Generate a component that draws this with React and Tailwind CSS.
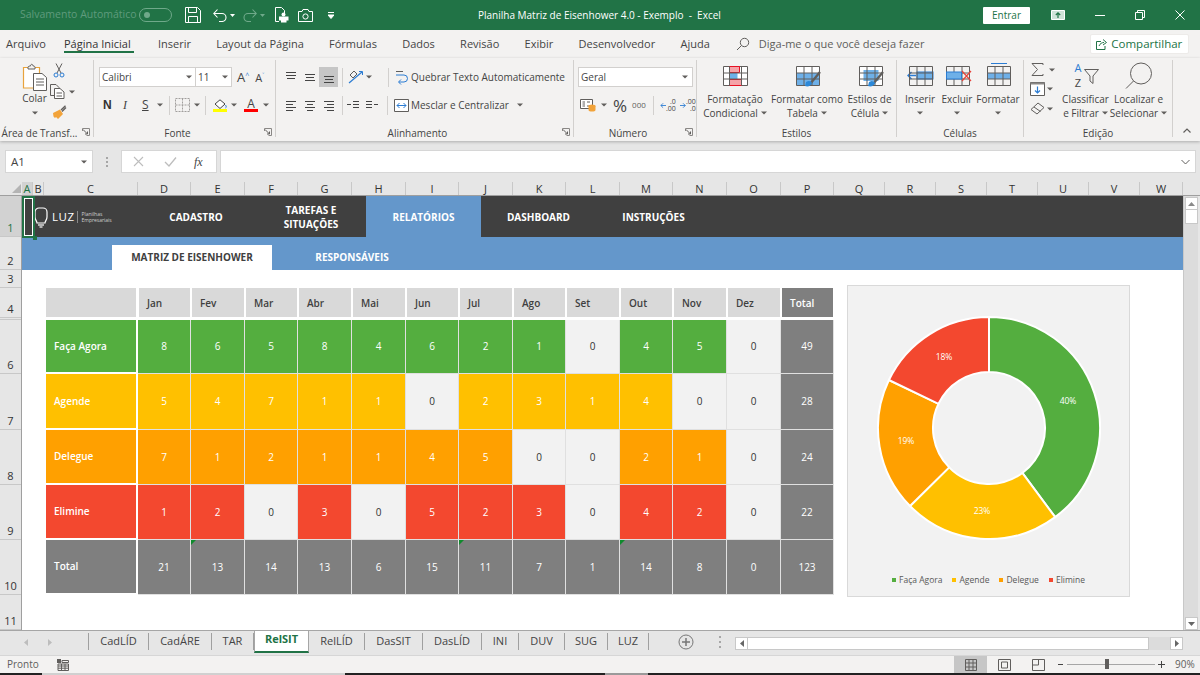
import React from 'react'

const ui = { fontFamily: '"Open Sans", "Noto Sans", sans-serif' }

const colHeads = [
  ['A', 11], ['B', 11], ['C', 94], ['D', 53], ['E', 54], ['F', 53], ['G', 54], ['H', 54], ['I', 53], ['J', 54], ['K', 53], ['L', 54],
  ['M', 53], ['N', 54], ['O', 54], ['P', 53], ['Q', 51], ['R', 51], ['S', 51], ['T', 51], ['U', 51], ['V', 51], ['W', 43],
]

const rowHeads = [
  ['1', 'h-[41px]'], ['2', 'h-[33px]'], ['3', 'h-[18px]'], ['4', 'h-[30px]'], ['', 'h-[2px]'], ['6', 'h-[54px]'], ['7', 'h-[56px]'],
  ['8', 'h-[55px]'], ['9', 'h-[55px]'], ['10', 'h-[55px]'], ['11', 'h-[35px]'],
]

const months = ['Jan', 'Fev', 'Mar', 'Abr', 'Mai', 'Jun', 'Jul', 'Ago', 'Set', 'Out', 'Nov', 'Dez']

const rows = [
  { name: 'Faça Agora', color: 'bg-[#54ae3f]', h: 'h-[54px]', values: [8, 6, 5, 8, 4, 6, 2, 1, 0, 4, 5, 0], total: 49 },
  { name: 'Agende', color: 'bg-[#ffc000]', h: 'h-[56px]', values: [5, 4, 7, 1, 1, 0, 2, 3, 1, 4, 0, 0], total: 28 },
  { name: 'Delegue', color: 'bg-[#ffa000]', h: 'h-[55px]', values: [7, 1, 2, 1, 1, 4, 5, 0, 0, 2, 1, 0], total: 24 },
  { name: 'Elimine', color: 'bg-[#f3482f]', h: 'h-[55px]', values: [1, 2, 0, 3, 0, 5, 2, 3, 0, 4, 2, 0], total: 22 },
]
const totals = [21, 13, 14, 13, 6, 15, 11, 7, 1, 14, 8, 0]
const flagged = [1, 6, 9]

const sheetTabs = [
  ['CadLÍD', 'w-[60px]'], ['CadÁRE', 'w-[63px]'], ['TAR', 'w-[42px]'], ['RelSIT', 'w-[55px]'], ['RelLÍD', 'w-[56px]'], ['DasSIT', 'w-[58px]'],
  ['DasLÍD', 'w-[59px]'], ['INI', 'w-[37px]'], ['DUV', 'w-[46px]'], ['SUG', 'w-[43px]'], ['LUZ', 'w-[41px]'],
]

const slices = [
  { value: 49, color: '#54ae3f' },
  { value: 28, color: '#ffc000' },
  { value: 24, color: '#ffa000' },
  { value: 22, color: '#f3482f' },
]

function Caret({ className = '' }) {
  return (
    <svg width="6" height="4" viewBox="0 0 6 4" className={className}>
      <path d="M0 0.5h6L3 3.5z" fill="#605e5c" />
    </svg>
  )
}

function Launcher() {
  return (
    <svg width="8" height="8" viewBox="0 0 8 8" className="absolute right-[3px] bottom-[1px]">
      <path d="M0.5 3V0.5H7.5V7.5H4.5" fill="none" stroke="#8a8886" />
      <path d="M1 1.5L5.5 6M3 6H5.5V3.5" fill="none" stroke="#605e5c" />
    </svg>
  )
}

function Sep({ className = '' }) {
  return <div className={`w-px h-[19px] bg-[#d2d0ce] ${className}`} />
}

function Lines({ items, selected }) {
  return (
    <div className={`w-[19px] h-[20px] flex items-center justify-center ${selected ? 'bg-[#c6c6c6]' : ''}`}>
      <svg width="14" height="14" viewBox="0 0 14 14">
        {items.map(([x1, x2, y], i) => (
          <path key={i} d={`M${x1} ${y}H${x2}`} stroke="#444" strokeWidth="1" />
        ))}
      </svg>
    </div>
  )
}

function Group({ label, launcher, className, children }) {
  return (
    <div className={`relative flex flex-col h-[77px] mt-[2px] border-r border-[#d2d0ce] ${className}`}>
      <div className="flex-1 min-h-0">{children}</div>
      <div className={`h-[8px] text-center text-[10px] leading-[8px] text-[#444] whitespace-nowrap ${launcher ? 'pr-[14px]' : ''}`}>{label}</div>
      {launcher && <Launcher />}
    </div>
  )
}

function BigButton({ icon, lines, className, caretBelow }) {
  return (
    <div className={`flex flex-col items-center shrink-0 ${className}`}>
      <div className="h-[27px] flex items-end">{icon}</div>
      <div className="mt-[5px] text-[10px] leading-[14px] text-[#444] text-center whitespace-nowrap">
        {lines.map((l, i) => (
          <div key={i} className="flex items-center justify-center gap-[3px]">
            {l}
            {!caretBelow && i === lines.length - 1 && <Caret />}
          </div>
        ))}
        {caretBelow && <div className="h-[14px] flex items-center justify-center"><Caret /></div>}
      </div>
    </div>
  )
}

function TableIcon({ children }) {
  return (
    <svg width="30" height="26" viewBox="0 0 30 26">
      {children}
    </svg>
  )
}

function SheetGrid() {
  return (
    <path d="M4.5 5.5H27.5V24.5H4.5ZM4.5 12H27.5M4.5 18H27.5M12 5.5V24.5M20 5.5V24.5" fill="none" stroke="#605e5c" />
  )
}

function Brush() {
  return (
    <g>
      <path d="M18 23L28 11" stroke="#605e5c" strokeWidth="2.4" />
      <path d="M14 21c3-2 5-1 6 1-1 3-4 4-7 3z" fill="#2b88d8" />
    </g>
  )
}

function TitleBar() {
  return (
    <div className="relative h-[30px] bg-[#217346] flex items-center text-white shrink-0">
      <span className="ml-[20px] w-[119px] text-[10.5px] text-[#5f9b7d] whitespace-nowrap">Salvamento Automático</span>
      <div className="w-[33px] h-[14px] rounded-full border border-[#6fa98a] flex items-center pl-[4px]">
        <div className="w-[6px] h-[6px] rounded-full bg-[#6fa98a]" />
      </div>
      <svg width="16" height="16" viewBox="0 0 16 16" className="ml-[13px]">
        <path d="M0.5 0.5H12.5L15.5 3.5V15.5H0.5ZM3.5 0.5V5.5H11.5V0.5M3.5 15.5V9.5H12.5V15.5" fill="none" stroke="#fff" />
      </svg>
      <svg width="14" height="14" viewBox="0 0 14 14" className="ml-[12px]">
        <path d="M1 5.5H9a4 4 0 0 1 0 8H6M4.5 1.5L0.8 5.5l3.7 4" fill="none" stroke="#fff" strokeWidth="1.1" />
      </svg>
      <svg width="5" height="3" viewBox="0 0 5 3" className="ml-[3px]"><path d="M0 0h5L2.5 3z" fill="#fff" /></svg>
      <svg width="14" height="14" viewBox="0 0 14 14" className="ml-[8px]">
        <path d="M13 5.5H5a4 4 0 0 0 0 8h3M9.5 1.5l3.7 4-3.7 4" fill="none" stroke="#6fa98a" strokeWidth="1.1" />
      </svg>
      <svg width="5" height="3" viewBox="0 0 5 3" className="ml-[3px]"><path d="M0 0h5L2.5 3z" fill="#6fa98a" /></svg>
      <svg width="14" height="16" viewBox="0 0 14 16" className="ml-[10px]">
        <path d="M0.5 0.5H6.5L9.5 3.5V7M0.5 0.5V14.5H4" fill="none" stroke="#fff" />
        <path d="M4 9.5H13.5V13.5H11.5V15.5H6V13.5H4Z" fill="#fff" />
        <circle cx="8.5" cy="7.5" r="2" fill="#fff" />
      </svg>
      <svg width="15" height="13" viewBox="0 0 15 13" className="ml-[9px]">
        <path d="M0.5 2.5H4L5 0.5H10L11 2.5H14.5V12.5H0.5Z" fill="none" stroke="#fff" />
        <circle cx="7.5" cy="7.5" r="2.6" fill="none" stroke="#fff" />
      </svg>
      <svg width="6" height="7" viewBox="0 0 6 7" className="ml-[15px]">
        <path d="M0 0.5h6M0 3h6L3 6.5z" stroke="#fff" fill="#fff" strokeWidth="1" />
      </svg>
      <span className="ml-[144px] w-[242px] text-center text-[10px] whitespace-nowrap">Planilha Matriz de Eisenhower 4.0 - Exemplo&nbsp; -&nbsp; Excel</span>
      <button className="ml-[263px] w-[47px] h-[17px] bg-white rounded-[1px] text-[#217346] text-[10px] leading-[17px]">Entrar</button>
      <svg width="14" height="12" viewBox="0 0 14 12" className="ml-[21px]">
        <path d="M0.5 1.5H13.5V10.5H0.5Z" fill="#cfe3d8" stroke="#fff" />
        <path d="M7 9V4M4.8 6L7 3.8 9.2 6" fill="none" stroke="#217346" strokeWidth="1.2" />
      </svg>
      <div className="ml-[30px] w-[10px] h-px bg-white" />
      <svg width="10" height="10" viewBox="0 0 10 10" className="ml-[30px]">
        <path d="M0.5 2.5H7.5V9.5H0.5ZM2.5 2.5V0.5H9.5V7.5H7.5" fill="none" stroke="#fff" />
      </svg>
      <svg width="10" height="10" viewBox="0 0 10 10" className="ml-[30px]">
        <path d="M0.5 0.5L9.5 9.5M9.5 0.5L0.5 9.5" stroke="#fff" />
      </svg>
    </div>
  )
}

function TabRow() {
  const tabs = ['Inserir', 'Layout da Página', 'Fórmulas', 'Dados', 'Revisão', 'Exibir', 'Desenvolvedor', 'Ajuda']
  return (
    <div className="h-[28px] bg-[#f3f2f1] flex items-center text-[11px] text-[#444] shrink-0 whitespace-nowrap">
      <span className="ml-[6px] w-[58px]">Arquivo</span>
      <div className="relative w-[94px] h-full flex items-center">
        <span className="text-[#333]">Página Inicial</span>
        <div className="absolute left-0 bottom-[5px] w-[70px] h-[2px] bg-[#217346]" />
      </div>
      <div className="flex gap-[25.25px]">
        {tabs.map((t) => <span key={t}>{t}</span>)}
      </div>
      <svg width="14" height="14" viewBox="0 0 14 14" className="ml-[26px]">
        <circle cx="8.5" cy="5.5" r="4.2" fill="none" stroke="#605e5c" />
        <path d="M5.5 8.5L1 13" stroke="#605e5c" />
      </svg>
      <span className="ml-[9px] w-[331px] text-[#605e5c]">Diga-me o que você deseja fazer</span>
      <div className="w-[99px] h-[20px] bg-white rounded-[2px] border border-[#edebe9] flex items-center justify-center gap-[4px] text-[11.5px] text-[#217346]">
        <svg width="11" height="11" viewBox="0 0 11 11">
          <path d="M5 2.5H0.5V10.5H9V7M3 7C4 4.5 6 3.5 8 3.5M7 0.5L10.5 3.5 7 6" fill="none" stroke="#217346" />
        </svg>
        <span>Compartilhar</span>
      </div>
    </div>
  )
}

function Ribbon() {
  const select = 'h-[20px] bg-white border border-[#d2d0ce] flex items-center text-[10px] text-[#444]'
  return (
    <div className="relative h-[83px] bg-[#f3f2f1] flex text-[#444] shrink-0 shadow-[0_1px_3px_rgba(0,0,0,0.25)] z-10">
      <Group label="Área de Transf..." launcher className="w-[94px]">
        <div className="flex pl-[19px] pt-[3px]">
          <div className="w-[31px] flex flex-col items-center">
            <svg width="26" height="28" viewBox="0 0 26 28">
              <path d="M1.5 4.5H17.5V25H1.5Z" fill="#fff" stroke="#e8a33d" strokeWidth="1.2" />
              <path d="M6 4.5C6 3 8 3 8.5 3 8.5 0.8 11 0.8 11 3 11.5 3 13 3 13 4.5V6H6Z" fill="#f3f2f1" stroke="#605e5c" />
              <path d="M11.5 10.5H20L24.5 14.5V27.5H11.5Z" fill="#fff" stroke="#605e5c" />
              <path d="M14 16H22M14 19H22M14 22H22" stroke="#605e5c" />
            </svg>
            <span className="text-[10px] leading-[14px]">Colar</span>
            <Caret className="mt-[6px]" />
          </div>
          <div className="ml-[2px] flex flex-col gap-[6px]">
            <svg width="14" height="15" viewBox="0 0 14 15">
              <path d="M4 0.5L9 10M10 0.5L5 10" stroke="#605e5c" />
              <circle cx="4" cy="12" r="2" fill="none" stroke="#2b7cd3" />
              <circle cx="10" cy="12" r="2" fill="none" stroke="#2b7cd3" />
            </svg>
            <div className="flex items-center gap-[4px]">
              <svg width="15" height="15" viewBox="0 0 15 15" className="-ml-[2px]">
                <path d="M0.5 0.5H6L9 3.5V4M0.5 0.5V11.5H4" fill="none" stroke="#605e5c" />
                <path d="M4.5 4.5H10L14 8V14.5H4.5ZM6.5 9H12M6.5 12H12" fill="#fff" stroke="#605e5c" />
              </svg>
              <Caret />
            </div>
            <svg width="15" height="15" viewBox="0 0 15 15">
              <path d="M9 5L13.5 0.8M10 6.5L14 2.5" stroke="#605e5c" strokeWidth="1.4" />
              <path d="M1 8L8 4.5 11 9 6 14 4 12 3 13 1.5 11.5Z" fill="#f2a33a" />
            </svg>
          </div>
        </div>
      </Group>

      <Group label="Fonte" launcher className="w-[182px]">
        <div className="pl-[5px] pt-[7px] flex items-center h-[27px]">
          <div className={`${select} w-[97px] pl-[2px] justify-between pr-[3px]`}>
            <span>Calibri</span>
            <Caret />
          </div>
          <div className={`${select} w-[37px] -ml-px pl-[2px] justify-between pr-[3px]`}>
            <span>11</span>
            <Caret />
          </div>
          <span className="ml-[5px] text-[13px] leading-none">A<sup className="text-[7px] text-[#2b7cd3]">^</sup></span>
          <span className="ml-[6px] text-[11px] leading-none">A<sup className="text-[7px] text-[#2b7cd3]">˅</sup></span>
        </div>
        <div className="pl-[9px] pt-[8px] flex items-center h-[28px]">
          <span className="w-[20px] text-[12px] font-bold text-[#333]" style={{ fontFamily: '"Liberation Sans", sans-serif' }}>N</span>
          <span className="w-[19px] text-[12px] italic" style={{ fontFamily: '"Liberation Serif", serif' }}>I</span>
          <span className="w-[12px] text-[12px] underline">S</span>
          <Caret className="ml-[3px]" />
          <Sep className="ml-[6px]" />
          <svg width="15" height="14" viewBox="0 0 15 14" className="ml-[5px]">
            <path d="M0.5 0.5H14.5V13.5H0.5ZM7.5 0.5V13.5M0.5 7H14.5" fill="none" stroke="#a19f9d" strokeDasharray="2 1" />
          </svg>
          <Caret className="ml-[4px]" />
          <Sep className="ml-[5px]" />
          <div className="ml-[6px] w-[15px] flex flex-col items-center">
            <svg width="14" height="10" viewBox="0 0 14 10">
              <path d="M2 5L7 0.8 12 5 7 9.5Z" fill="#fff" stroke="#444" />
              <path d="M12.5 6c1 1.5 1 2.5 0 3" stroke="#2b7cd3" fill="none" />
            </svg>
            <div className="w-[14px] h-[3px] bg-[#ffff00]" />
          </div>
          <Caret className="ml-[4px]" />
          <div className="ml-[7px] w-[14px] flex flex-col items-center">
            <span className="text-[12px] leading-[11px]">A</span>
            <div className="w-[14px] h-[3px] bg-[#ff0000]" />
          </div>
          <Caret className="ml-[5px]" />
        </div>
      </Group>

      <Group label="Alinhamento" launcher className="w-[298px]">
        <div className="pl-[5px] pt-[7px] flex items-center h-[27px]">
          <Lines items={[[2, 12, 2.5], [2, 12, 5.5], [3, 11, 8.5]]} />
          <Lines items={[[2, 12, 4.5], [3, 11, 7.5], [2, 12, 10.5]]} />
          <Lines selected items={[[2, 12, 6.5], [3, 11, 9.5], [2, 12, 12.5]]} />
          <Sep className="ml-[4px]" />
          <svg width="16" height="15" viewBox="0 0 16 15" className="ml-[5px]">
            <path d="M1 13L14 2" stroke="#2b7cd3" strokeWidth="1.2" />
            <path d="M11 1.5H14.5V5" stroke="#2b7cd3" fill="none" />
            <path d="M2 5L6 1 9 4 5 8Z" fill="none" stroke="#605e5c" />
          </svg>
          <Caret className="ml-[2px]" />
          <Sep className="ml-[16px]" />
          <svg width="14" height="16" viewBox="0 0 14 16" className="ml-[6px]">
            <path d="M1 6H9a3 3 0 0 1 0 7H4M6 10.5L3.5 13 6 15.5" fill="none" stroke="#2b7cd3" />
            <path d="M1 2.5H8" stroke="#605e5c" />
          </svg>
          <span className="ml-[2px] text-[10px] whitespace-nowrap">Quebrar Texto Automaticamente</span>
        </div>
        <div className="pl-[5px] pt-[8px] flex items-center h-[28px]">
          <Lines items={[[2, 12, 3.5], [2, 9, 6.5], [2, 12, 9.5], [2, 9, 12.5]]} />
          <Lines items={[[2, 12, 3.5], [4, 10, 6.5], [2, 12, 9.5], [4, 10, 12.5]]} />
          <Lines items={[[2, 12, 3.5], [5, 12, 6.5], [2, 12, 9.5], [5, 12, 12.5]]} />
          <Sep className="ml-[4px]" />
          <Lines items={[[7, 13, 3.5], [7, 13, 6.5], [7, 13, 9.5], [1, 5, 6.5]]} />
          <Lines items={[[1, 7, 3.5], [1, 7, 6.5], [1, 7, 9.5], [9, 13, 6.5]]} />
          <Sep className="ml-[6px]" />
          <svg width="15" height="13" viewBox="0 0 15 13" className="ml-[6px]">
            <path d="M0.5 0.5H14.5V12.5H0.5Z" fill="#fff" stroke="#605e5c" />
            <path d="M3 6.5H12M9.5 4L12 6.5 9.5 9M5.5 4L3 6.5 5.5 9" fill="none" stroke="#2b7cd3" />
          </svg>
          <span className="ml-[2px] text-[10px] whitespace-nowrap">Mesclar e Centralizar</span>
          <Caret className="ml-[8px]" />
        </div>
      </Group>

      <Group label="Número" launcher className="w-[123px]">
        <div className="pl-[4px] pt-[7px] flex items-center h-[27px]">
          <div className={`${select} w-[115px] pl-[2px] justify-between pr-[4px]`}>
            <span>Geral</span>
            <Caret />
          </div>
        </div>
        <div className="pl-[6px] pt-[8px] flex items-center h-[28px]">
          <svg width="16" height="14" viewBox="0 0 16 14">
            <path d="M0.5 1.5H12.5V10.5H0.5Z" fill="#fff" stroke="#605e5c" />
            <path d="M2.5 4H5M2.5 6H5M2.5 8H5M7 4H10M7 8H10" stroke="#605e5c" />
            <ellipse cx="12" cy="8" rx="3.5" ry="1.5" fill="#f2a33a" />
            <path d="M8.5 8V12c0 2 7 2 7 0V8" fill="#f2a33a" />
          </svg>
          <Caret className="ml-[5px]" />
          <span className="ml-[6px] text-[17px] leading-none">%</span>
          <span className="ml-[5px] text-[8px] leading-none text-[#605e5c]">000</span>
          <Sep className="ml-[7px]" />
          <div className="ml-[6px] w-[16px] flex items-center">
            <svg width="7" height="7" viewBox="0 0 7 7"><path d="M7 3.5H1M3.5 1L1 3.5 3.5 6" fill="none" stroke="#2b7cd3" /></svg>
            <div className="text-[7px] leading-[7px] text-right flex-1">.0<br />.00</div>
          </div>
          <div className="ml-[4px] w-[16px] flex items-center">
            <svg width="7" height="7" viewBox="0 0 7 7"><path d="M0 3.5H6M3.5 1L6 3.5 3.5 6" fill="none" stroke="#2b7cd3" /></svg>
            <div className="text-[7px] leading-[7px] text-right flex-1">.00<br />.0</div>
          </div>
        </div>
      </Group>

      <Group label="Estilos" className="w-[200px]">
        <div className="flex pl-[1px]">
          <BigButton
            className="w-[74px]"
            lines={['Formatação', 'Condicional']}
            icon={
              <TableIcon>
                <path d="M3.5 5.5H27.5V24.5H3.5Z" fill="#fff" stroke="#605e5c" />
                <path d="M9.5 5.5H19.5V11.5H9.5ZM9.5 18.5H21.5V24.5H9.5Z" fill="#f5a3a8" stroke="#e81123" />
                <rect x="9.5" y="12" width="8" height="6" fill="#6eb0e8" />
                <path d="M3.5 12H27.5M3.5 18H27.5M9.5 5.5V24.5M21.5 5.5V24.5" fill="none" stroke="#605e5c" />
              </TableIcon>
            }
          />
          <BigButton
            className="w-[70px]"
            lines={['Formatar como', 'Tabela']}
            icon={
              <TableIcon>
                <rect x="4.5" y="5.5" width="23" height="6.5" fill="#fff" />
                <rect x="4.5" y="12" width="23" height="12.5" fill="#6eb0e8" />
                <SheetGrid />
                <Brush />
              </TableIcon>
            }
          />
          <BigButton
            className="w-[55px]"
            lines={['Estilos de', 'Célula']}
            icon={
              <TableIcon>
                <rect x="4.5" y="5.5" width="23" height="19" fill="#fff" />
                <rect x="8.5" y="9" width="15" height="11" fill="#6eb0e8" />
                <SheetGrid />
                <Brush />
              </TableIcon>
            }
          />
        </div>
      </Group>

      <Group label="Células" className="w-[127px]">
        <div className="flex pl-[5px]">
          <BigButton
            className="w-[36px]"
            caretBelow
            lines={['Inserir']}
            icon={
              <TableIcon>
                <rect x="12" y="11" width="16" height="7" fill="#6eb0e8" stroke="#2b7cd3" />
                <path d="M3 14.5H11M6.5 11L3 14.5 6.5 18" fill="none" stroke="#2b7cd3" strokeWidth="1.4" />
                <SheetGrid />
              </TableIcon>
            }
          />
          <BigButton
            className="w-[38px]"
            caretBelow
            lines={['Excluir']}
            icon={
              <TableIcon>
                <SheetGrid />
                <rect x="4.5" y="11" width="15" height="7" fill="#6eb0e8" stroke="#2b7cd3" />
                <path d="M20 10L29 20M29 10L20 20" stroke="#e8453c" strokeWidth="1.2" />
              </TableIcon>
            }
          />
          <BigButton
            className="w-[44px]"
            caretBelow
            lines={['Formatar']}
            icon={
              <TableIcon>
                <rect x="4.5" y="12" width="23" height="6" fill="#6eb0e8" />
                <SheetGrid />
                <path d="M8 2.5H24" stroke="#2b7cd3" />
              </TableIcon>
            }
          />
        </div>
      </Group>

      <Group label="Edição" className="w-[149px]">
        <div className="flex">
          <div className="w-[34px] pl-[7px] pt-[3px] flex flex-col gap-[6px]">
            <div className="flex items-center gap-[5px]">
              <svg width="13" height="13" viewBox="0 0 13 13"><path d="M12 2V0.5H1L6.5 6.5 1 12.5H12V11" fill="none" stroke="#605e5c" /></svg>
              <Caret />
            </div>
            <div className="flex items-center gap-[2px]">
              <svg width="15" height="14" viewBox="0 0 15 14" className="-ml-px">
                <path d="M0.5 0.5H14.5V13.5H0.5Z" fill="#fff" stroke="#605e5c" />
                <path d="M0.5 0.5H14.5V2.5H0.5Z" fill="#8a8886" />
                <path d="M7.5 4.5V10.5M5 8.5L7.5 11 10 8.5" fill="none" stroke="#2b7cd3" strokeWidth="1.2" />
              </svg>
              <Caret />
            </div>
            <div className="flex items-center gap-[2px]">
              <svg width="15" height="13" viewBox="0 0 15 13" className="-ml-px"><path d="M1 7.5L8 1 14 5.5 7 12Z M4 5L10.5 9.5" fill="none" stroke="#605e5c" /></svg>
              <Caret />
            </div>
          </div>
          <BigButton
            className="w-[55px]"
            lines={['Classificar', 'e Filtrar']}
            icon={
              <div className="w-[27px] h-[28px] flex">
                <div className="pt-px text-[11px] leading-[15px] w-[12px] text-center">
                  <div className="text-[#2b7cd3]">A</div>
                  <div>Z</div>
                </div>
                <svg width="15" height="15" viewBox="0 0 15 15" className="mt-[10px]">
                  <path d="M0.5 0.5H14.5L9 7V14.5L6 12V7Z" fill="none" stroke="#605e5c" />
                </svg>
              </div>
            }
          />
          <BigButton
            className="w-[55px] ml-[-2px]"
            lines={['Localizar e', 'Selecionar']}
            icon={
              <svg width="28" height="28" viewBox="0 0 28 28" className="overflow-visible">
                <circle cx="16" cy="14.5" r="10.5" fill="none" stroke="#605e5c" />
                <path d="M8.5 22L1 29.5" stroke="#605e5c" />
              </svg>
            }
          />
        </div>
      </Group>

      <div className="flex-1 flex items-end justify-center pb-[8px]">
        <svg width="8" height="5" viewBox="0 0 8 5"><path d="M0.5 4.5L4 1l3.5 3.5" fill="none" stroke="#605e5c" strokeWidth="1.2" /></svg>
      </div>
    </div>
  )
}

function FormulaBar() {
  return (
    <div className="h-[41px] bg-[#e6e6e6] flex items-start pt-[9px] pl-[5px] text-[#444] shrink-0">
      <div className="w-[88px] h-[23px] bg-white border border-[#d6d6d6] flex items-center justify-between pl-[5px] pr-[5px] text-[11.5px]">
        <span>A1</span>
        <Caret />
      </div>
      <div className="w-[28px] h-[23px] flex flex-col items-center justify-center gap-[2px]">
        <div className="w-[2px] h-[2px] bg-[#a6a6a6]" />
        <div className="w-[2px] h-[2px] bg-[#a6a6a6]" />
        <div className="w-[2px] h-[2px] bg-[#a6a6a6]" />
      </div>
      <div className="w-[96px] h-[23px] bg-white border border-[#d6d6d6] flex items-center pl-[11px]">
        <svg width="11" height="11" viewBox="0 0 11 11"><path d="M1 1L10 10M10 1L1 10" stroke="#bdbdbd" strokeWidth="1.1" /></svg>
        <svg width="13" height="11" viewBox="0 0 13 11" className="ml-[20px]"><path d="M1 6L5 10 12 1.5" fill="none" stroke="#bdbdbd" strokeWidth="1.3" /></svg>
        <span className="ml-[17px] text-[12px] italic" style={{ fontFamily: '"Liberation Serif", serif' }}>fx</span>
      </div>
      <div className="ml-[3px] w-[976px] h-[23px] bg-white border border-[#d6d6d6] flex items-center justify-end pr-[5px]">
        <svg width="9" height="6" viewBox="0 0 9 6"><path d="M0.5 1L4.5 5l4-4" fill="none" stroke="#605e5c" /></svg>
      </div>
    </div>
  )
}

function ColumnHeaders() {
  return (
    <div className="h-[14px] bg-[#e6e6e6] flex shrink-0 border-b border-[#9f9f9f]">
      <div className="w-[22px] flex items-end justify-end pr-[1px] pb-[2px]">
        <svg width="9" height="9" viewBox="0 0 9 9"><path d="M9 0V9H0Z" fill="#b4b4b4" /></svg>
      </div>
      {colHeads.map(([name, w], i) => (
        <div
          key={name}
          style={{ width: w }}
          className={`shrink-0 text-center text-[11px] leading-[13px] border-r border-[#c8c8c8] ${i === 0 ? 'bg-[#d2d2d2] text-[#217346]' : 'text-[#333]'}`}
        >
          {name}
        </div>
      ))}
    </div>
  )
}

function RowHeaders() {
  return (
    <div className="w-[22px] shrink-0 bg-[#e6e6e6] flex flex-col border-r border-[#9f9f9f]">
      {rowHeads.map(([name, h], i) => (
        <div
          key={i}
          className={`${h} shrink-0 flex items-end justify-center text-[11px] leading-[14px] pb-[1px] border-b border-[#c8c8c8] ${i === 0 ? 'bg-[#d2d2d2] text-[#217346]' : 'text-[#333]'}`}
        >
          {name}
        </div>
      ))}
    </div>
  )
}

function Logo() {
  return (
    <div className="flex items-center w-[102px] h-full text-white">
      <svg width="14" height="21" viewBox="0 0 14 21" className="mt-[1px]">
        <path d="M1 5a4 4 0 0 1 4-4h4a4 4 0 0 1 4 4v5c0 3-2 4-2 6H3c0-2-2-3-2-6z" fill="none" stroke="#fff" strokeWidth="1.2" />
        <path d="M4 18H10M5.5 20H8.5" stroke="#d9d9d9" strokeWidth="1.4" />
      </svg>
      <span className="ml-[4px] text-[11.5px] leading-none tracking-[0.5px]">LUZ</span>
      <div className="ml-[3px] w-px h-[12px] bg-[#8a8a8a]" />
      <span className="ml-[3px] text-[5px] leading-[6px] text-[#cfcfcf]">Planilhas<br />Empresariais</span>
    </div>
  )
}

function Header() {
  const nav = 'flex items-center justify-center text-center text-white text-[10px] font-bold leading-[14px]'
  return (
    <>
      <div className="h-[41px] bg-[#404040] flex shrink-0 pl-[12px]">
        <Logo />
        <div className={`${nav} w-[120px]`}>CADASTRO</div>
        <div className={`${nav} w-[110px]`}>TAREFAS E<br />SITUAÇÕES</div>
        <div className={`${nav} w-[115px] bg-[#6497cb]`}>RELATÓRIOS</div>
        <div className={`${nav} w-[115px]`}>DASHBOARD</div>
        <div className={`${nav} w-[115px]`}>INSTRUÇÕES</div>
      </div>
      <div className="h-[33px] bg-[#6497cb] flex items-end shrink-0 pl-[90px]">
        <div className="w-[160px] h-[25px] bg-white flex items-center justify-center text-[10px] font-bold text-[#404040]">MATRIZ DE EISENHOWER</div>
        <div className="w-[160px] h-[25px] flex items-center justify-center text-[10px] font-bold text-white">RESPONSÁVEIS</div>
      </div>
    </>
  )
}

function Matrix() {
  const cell = 'flex items-center justify-center text-[10px] border-r border-b border-[#e0e0e0]'
  const label = 'ml-[1px] mr-[2px] mb-[2px] flex items-center pl-[8px] text-[10px] font-semibold text-white'
  const head = 'h-[29px] mx-[1px] mb-[3px] pt-px flex items-center pl-[8px] text-[10px] font-semibold'
  return (
    <div className="mt-[3px] w-[789px] grid grid-cols-[93px_53px_54px_53px_54px_54px_53px_54px_53px_54px_53px_54px_54px_53px]">
      <div className="h-[29px] ml-[1px] mr-[2px] mb-[3px] bg-[#d9d9d9]" />
      {months.map((m) => (
        <div key={m} className={`${head} bg-[#d9d9d9] text-[#404040]`}>{m}</div>
      ))}
      <div className={`${head} bg-[#7f7f7f] text-white`}>Total</div>

      {rows.map((r) => (
        <React.Fragment key={r.name}>
          <div className={`${r.color} ${label}`}>{r.name}</div>
          {r.values.map((v, i) => (
            <div key={i} className={`${r.h} ${cell} ${v === 0 ? 'bg-[#f2f2f2] text-[#333]' : `${r.color} text-white`}`}>{v}</div>
          ))}
          <div className={`${r.h} ${cell} bg-[#7f7f7f] text-white`}>{r.total}</div>
        </React.Fragment>
      ))}

      <div className={`bg-[#7f7f7f] ${label}`}>Total</div>
      {totals.map((v, i) => (
        <div key={i} className={`relative h-[55px] ${cell} bg-[#7f7f7f] text-white`}>
          {v}
          {flagged.includes(i) && (
            <svg width="5" height="5" viewBox="0 0 5 5" className="absolute left-0 top-0"><path d="M0 0H5L0 5Z" fill="#0f8a2c" /></svg>
          )}
        </div>
      ))}
      <div className={`h-[55px] ${cell} bg-[#7f7f7f] text-white`}>123</div>
    </div>
  )
}

function Donut() {
  const cx = 112
  const cy = 112
  const outer = 111
  const inner = 56
  const total = slices.reduce((s, x) => s + x.value, 0)
  let acc = 0
  const pt = (r, a) => `${(cx + r * Math.sin(a)).toFixed(2)} ${(cy - r * Math.cos(a)).toFixed(2)}`
  const parts = slices.map((s) => {
    const start = (acc / total) * Math.PI * 2
    acc += s.value
    const end = (acc / total) * Math.PI * 2
    const large = end - start > Math.PI ? 1 : 0
    return {
      color: s.color,
      d: `M${pt(outer, start)}A${outer} ${outer} 0 ${large} 1 ${pt(outer, end)}L${pt(inner, end)}A${inner} ${inner} 0 ${large} 0 ${pt(inner, start)}Z`,
    }
  })
  const labels = [['40%', 191, 88], ['23%', 105, 198], ['19%', 29, 128], ['18%', 67, 44]]
  return (
    <svg width="224" height="224" viewBox="0 0 224 224" className="mt-[30px]">
      {parts.map((p) => <path key={p.color} d={p.d} fill={p.color} stroke="#fff" strokeWidth="2" />)}
      {labels.map(([t, x, y]) => (
        <text key={t} x={x} y={y} fill="#fff" fontSize="8.5" textAnchor="middle" fontFamily='"Open Sans", sans-serif'>{t}</text>
      ))}
    </svg>
  )
}

function ChartCard() {
  const legend = [['Faça Agora', 'bg-[#54ae3f]'], ['Agende', 'bg-[#ffc000]'], ['Delegue', 'bg-[#ffa000]'], ['Elimine', 'bg-[#f3482f]']]
  return (
    <div className="ml-[13px] w-[283px] h-[312px] bg-[#f2f2f2] border border-[#d9d9d9] flex flex-col items-center">
      <Donut />
      <div className="mt-[34px] flex gap-[10px] text-[8.5px] leading-[12px] text-[#595959]">
        {legend.map(([t, c]) => (
          <div key={t} className="flex items-center gap-[3px]">
            <div className={`w-[4px] h-[4px] ${c}`} />
            <span>{t}</span>
          </div>
        ))}
      </div>
    </div>
  )
}

function Scrollbar() {
  return (
    <div className="w-[15px] shrink-0 bg-[#dcdcdc] border-l border-[#c8c8c8] flex flex-col justify-between items-center pt-[1px]">
      <div className="flex flex-col">
        <div className="w-[13px] h-[13px] bg-white border border-[#c8c8c8] flex items-center justify-center">
          <svg width="7" height="4" viewBox="0 0 7 4"><path d="M0 4L3.5 0 7 4Z" fill="#8a8a8a" /></svg>
        </div>
        <div className="w-[13px] h-[15px] bg-white border border-[#c8c8c8] -mt-px" />
      </div>
      <div className="w-[13px] h-[13px] bg-white border border-[#c8c8c8] flex items-center justify-center">
        <svg width="7" height="4" viewBox="0 0 7 4"><path d="M0 0L3.5 4 7 0Z" fill="#666" /></svg>
      </div>
    </div>
  )
}

function SheetStrip() {
  return (
    <div className="h-[25px] bg-[#e6e6e6] border-t border-[#a6a6a6] flex items-start shrink-0 text-[11px] text-[#444]">
      <div className="w-[88px] h-[22px] flex items-center pl-[24px] gap-[20px]">
        <svg width="4" height="7" viewBox="0 0 4 7"><path d="M4 0L0 3.5 4 7Z" fill="#bdbdbd" /></svg>
        <svg width="4" height="7" viewBox="0 0 4 7"><path d="M0 0L4 3.5 0 7Z" fill="#bdbdbd" /></svg>
      </div>
      <div className="flex h-[17px] border-l border-[#9f9f9f] mt-[2px]">
        {sheetTabs.map(([t, w]) =>
          t === 'RelSIT' ? (
            <div key={t} className={`${w} h-[22px] -mt-[2px] pb-[3px] bg-white border-x border-[#a6a6a6] border-b-2 border-b-[#217346] flex items-center justify-center font-bold text-[#217346]`}>{t}</div>
          ) : (
            <div key={t} className={`${w} flex items-center justify-center border-r border-[#9f9f9f]`}>{t}</div>
          )
        )}
      </div>
      <svg width="16" height="16" viewBox="0 0 16 16" className="ml-[29px] mt-[3px]">
        <circle cx="8" cy="8" r="7" fill="none" stroke="#777" />
        <path d="M4 8H12M8 4V12" stroke="#777" strokeWidth="1.5" />
      </svg>
      <div className="ml-[25px] w-[2px] h-[12px] mt-[5px] flex flex-col justify-between">
        <div className="w-[2px] h-[2px] bg-[#a6a6a6]" />
        <div className="w-[2px] h-[2px] bg-[#a6a6a6]" />
        <div className="w-[2px] h-[2px] bg-[#a6a6a6]" />
      </div>
      <div className="ml-[14px] mt-[6px] h-[13px] w-[448px] flex bg-[#dcdcdc]">
        <div className="w-[13px] h-[13px] bg-white border border-[#c8c8c8] flex items-center justify-center">
          <svg width="4" height="7" viewBox="0 0 4 7"><path d="M4 0L0 3.5 4 7Z" fill="#666" /></svg>
        </div>
        <div className="w-[401px] h-[13px] bg-white border-y border-r border-[#c8c8c8]" />
        <div className="flex-1" />
        <div className="w-[13px] h-[13px] bg-white border border-[#c8c8c8] flex items-center justify-center">
          <svg width="4" height="7" viewBox="0 0 4 7"><path d="M0 0L4 3.5 0 7Z" fill="#666" /></svg>
        </div>
      </div>
    </div>
  )
}

function StatusBar() {
  return (
    <div className="h-[18px] bg-[#f3f2f1] flex items-center shrink-0 text-[10px] text-[#605e5c] border-t border-[#d6d6d6]">
      <span className="ml-[7px] w-[50px]">Pronto</span>
      <svg width="12" height="12" viewBox="0 0 12 12">
        <path d="M0 0H4V4H0Z" fill="#605e5c" />
        <path d="M5 1.5H11.5V3.5H5ZM1 5H11.5V11.5H1ZM1 7H11.5M1 9.2H11.5M4.5 5V11.5M8 5V11.5" fill="none" stroke="#605e5c" />
      </svg>
      <div className="ml-[885px] w-[33px] h-full bg-[#c6c6c6] flex items-center justify-center">
        <svg width="12" height="12" viewBox="0 0 12 12">
          <path d="M0.5 0.5H11.5V11.5H0.5ZM0.5 4H11.5M0.5 8H11.5M4 0.5V11.5M8 0.5V11.5" fill="none" stroke="#605e5c" />
        </svg>
      </div>
      <svg width="13" height="12" viewBox="0 0 13 12" className="ml-[11px]">
        <path d="M0.5 0.5H12.5V11.5H0.5ZM3.5 3H9.5V9H3.5Z" fill="none" stroke="#605e5c" />
      </svg>
      <svg width="13" height="12" viewBox="0 0 13 12" className="ml-[21px]">
        <path d="M0.5 0.5H12.5V11.5H0.5ZM0.5 6H6.5V0.5" fill="none" stroke="#605e5c" />
      </svg>
      <div className="ml-[13px] w-[5px] h-px bg-[#444]" />
      <div className="relative ml-[4px] w-[88px] h-px bg-[#a6a6a6]">
        <div className="absolute left-[38px] -top-[5px] w-[4px] h-[10px] bg-[#605e5c]" />
      </div>
      <svg width="7" height="7" viewBox="0 0 7 7" className="ml-[3px]"><path d="M0 3.5H7M3.5 0V7" stroke="#444" /></svg>
      <span className="ml-[10px]">90%</span>
    </div>
  )
}

export default function App() {
  return (
    <div className="w-[1200px] h-[675px] flex flex-col overflow-hidden bg-white" style={ui}>
      <TitleBar />
      <TabRow />
      <Ribbon />
      <FormulaBar />
      <ColumnHeaders />
      <div className="flex-1 min-h-0 flex bg-[#e6e6e6]">
        <RowHeaders />
        <div className="relative w-[1161px] shrink-0 bg-white flex flex-col">
          <Header />
          <div className="flex items-start pl-[23px] pt-[15px]">
            <Matrix />
            <ChartCard />
          </div>
          <div className="absolute left-0 top-0 w-[13px] h-[42px] border-2 border-[#217346] shadow-[inset_0_0_0_1px_#fff]" />
          <div className="absolute left-[11px] top-[40px] w-[4px] h-[4px] bg-[#217346]" />
        </div>
        <Scrollbar />
      </div>
      <SheetStrip />
      <StatusBar />
      <div className="h-[2px] flex shrink-0">
        <div className="w-[42px] bg-[#222]" />
        <div className="w-[303px] bg-[#d0d0d0]" />
        <div className="w-[260px] bg-[#222]" />
        <div className="w-[43px] bg-[#9a9a9a]" />
        <div className="flex-1 bg-[#222]" />
      </div>
    </div>
  )
}
